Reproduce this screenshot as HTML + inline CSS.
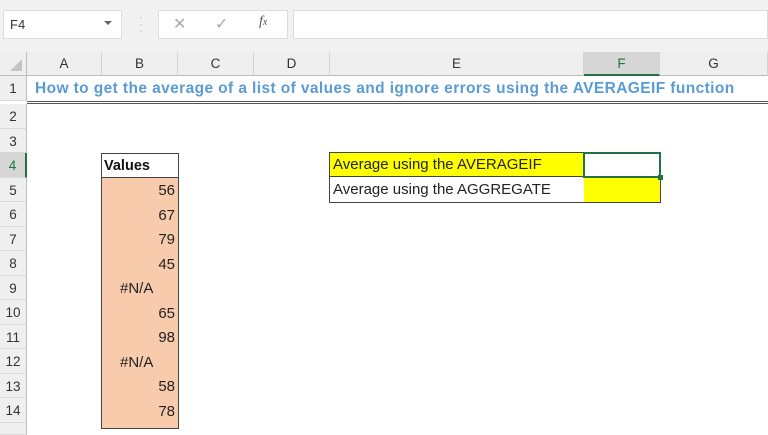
<!DOCTYPE html>
<html><head><style>
*{margin:0;padding:0;box-sizing:border-box}
body{width:768px;height:434px;overflow:hidden;background:#fff;font-family:"Liberation Sans",Calibri,sans-serif;position:relative}
.a{position:absolute}
.ch{position:absolute;top:52px;height:24px;background:#efefef;border-right:1px solid #d4d4d4;border-bottom:1px solid #bdbdbd;text-align:center;font-size:13.5px;line-height:24px;color:#333}
.rh{position:absolute;left:0;width:27px;background:#efefef;border-bottom:1px solid #dadada;border-right:1px solid #bdbdbd;text-align:center;font-size:13.5px;color:#333}
.v{position:absolute;left:102px;width:76px;height:24.6px;font-size:15px;line-height:25px;color:#222;text-align:right;padding-right:3px}
</style></head><body>
<div class="a" style="left:0;top:0;width:768px;height:52px;background:#f1f1f1"></div>
<div class="a" style="left:3px;top:10px;width:119px;height:29px;background:#fff;border:1px solid #dcdcdc;font-size:13px;line-height:27px;padding-left:6px;color:#333">F4</div>
<div class="a" style="left:104px;top:21px;width:0;height:0;border-left:4px solid transparent;border-right:4px solid transparent;border-top:4px solid #666"></div>
<div class="a" style="left:139px;top:14px;color:#bbb;font-size:12px;line-height:7px">·<br>·<br>·</div>
<div class="a" style="left:158px;top:10px;width:130px;height:29px;background:#fff;border:1px solid #dcdcdc"></div>
<div class="a" style="left:173px;top:14px;font-size:16px;color:#aaa">✕</div>
<div class="a" style="left:215px;top:14px;font-size:16px;color:#aaa">✓</div>
<div class="a" style="left:259px;top:14px;font-size:14px;color:#555;font-style:italic;font-family:'Liberation Serif',serif">f<span style="font-size:10px">x</span></div>
<div class="a" style="left:293px;top:10px;width:475px;height:29px;background:#fff;border:1px solid #dcdcdc"></div>

<div class="a" style="left:0;top:52px;width:27px;height:24px;background:#efefef;border-right:1px solid #bdbdbd;border-bottom:1px solid #bdbdbd"></div>
<div class="a" style="left:10px;top:59px;width:0;height:0;border-left:12px solid transparent;border-bottom:12px solid #c4c4c4"></div>
<div class="ch" style="left:27px;width:75px">A</div>
<div class="ch" style="left:102px;width:76px">B</div>
<div class="ch" style="left:178px;width:76px">C</div>
<div class="ch" style="left:254px;width:76px">D</div>
<div class="ch" style="left:330px;width:254px">E</div>
<div class="ch" style="left:584px;width:76px;background:#d6d6d6;border-bottom:2px solid #217346;color:#217346">F</div>
<div class="ch" style="left:660px;width:108px">G</div>

<div class="rh" style="top:76px;height:25px;line-height:25px">1</div>
<div class="a" style="left:27px;top:76px;width:741px;height:25px;font-size:15.5px;line-height:25px;font-weight:bold;color:#5b9bd5;padding-left:8px;white-space:nowrap;letter-spacing:0.4px">How to get the average of a list of values and ignore errors using the AVERAGEIF function</div>
<div class="a" style="left:27px;top:101px;width:741px;height:3px;border-top:1px solid #555;border-bottom:1px solid #555"></div>

<div class="rh" style="top:104px;height:24.5px;line-height:25px">2</div>
<div class="rh" style="top:128.5px;height:24.5px;line-height:25px">3</div>
<div class="rh" style="top:153px;height:24.5px;line-height:25px;border-right:2px solid #217346;background:#d6d6d6;color:#217346">4</div>
<div class="rh" style="top:177.5px;height:24.5px;line-height:25px">5</div>
<div class="rh" style="top:202px;height:24.5px;line-height:25px">6</div>
<div class="rh" style="top:226.5px;height:24.5px;line-height:25px">7</div>
<div class="rh" style="top:251px;height:24.5px;line-height:25px">8</div>
<div class="rh" style="top:275.5px;height:24.5px;line-height:25px">9</div>
<div class="rh" style="top:300px;height:24.5px;line-height:25px">10</div>
<div class="rh" style="top:324.5px;height:24.5px;line-height:25px">11</div>
<div class="rh" style="top:349px;height:24.5px;line-height:25px">12</div>
<div class="rh" style="top:373.5px;height:24.5px;line-height:25px">13</div>
<div class="rh" style="top:398px;height:24.5px;line-height:25px">14</div>
<div class="rh" style="top:422.5px;height:12px"></div>

<div class="a" style="left:101px;top:153px;width:78px;height:276px;background:#f8cbad;border:1px solid #444"></div>
<div class="a" style="left:102px;top:154px;width:76px;height:24px;background:#fff;border-bottom:1px solid #444;font-size:14.5px;font-weight:bold;line-height:25px;padding-left:2px;color:#111">Values</div>
<div class="v" style="top:178px">56</div>
<div class="v" style="top:202.5px">67</div>
<div class="v" style="top:227px">79</div>
<div class="v" style="top:251.5px">45</div>
<div class="v" style="top:276px;text-align:left;padding-left:18px">#N/A</div>
<div class="v" style="top:300.5px">65</div>
<div class="v" style="top:325px">98</div>
<div class="v" style="top:349.5px;text-align:left;padding-left:18px">#N/A</div>
<div class="v" style="top:374px">58</div>
<div class="v" style="top:398.5px">78</div>

<div class="a" style="left:329px;top:152px;width:332px;height:51px;border:1px solid #444"></div>
<div class="a" style="left:330px;top:153px;width:254px;height:24px;background:#ffff00;border-bottom:1px solid #444;font-size:15px;line-height:24px;padding-left:3px;color:#222">Average using the AVERAGEIF</div>
<div class="a" style="left:330px;top:177px;width:254px;height:25px;font-size:15px;line-height:25px;padding-left:3px;color:#222">Average using the AGGREGATE</div>
<div class="a" style="left:584px;top:177px;width:76px;height:25px;background:#ffff00"></div>
<div class="a" style="left:583px;top:152px;width:78px;height:26px;border:2px solid #217346;background:#fff"></div>
<div class="a" style="left:658px;top:175px;width:5px;height:5px;background:#217346"></div>
</body></html>
